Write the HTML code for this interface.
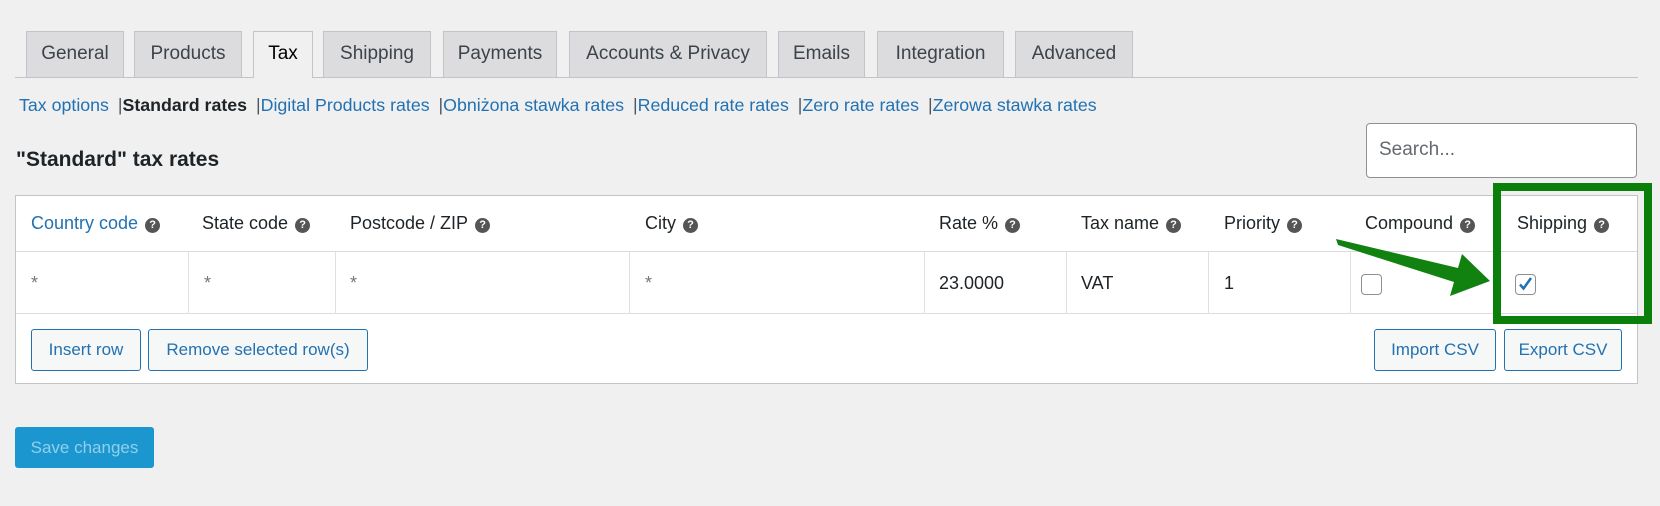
<!DOCTYPE html>
<html><head><meta charset="utf-8"><style>
*{box-sizing:border-box}
body{margin:0;width:1660px;height:506px;background:#f0f0f1;font-family:"Liberation Sans",sans-serif;color:#1d2327;position:relative;overflow:hidden}
.a{position:absolute}
.tab{position:absolute;top:31px;height:46px;background:#dcdcde;border:1px solid #c3c4c7;border-bottom:none;font-size:19px;color:#3c434a;text-align:center;line-height:44px}
.sub{top:95px;left:19px;font-size:17.8px;color:#2271b1;white-space:nowrap}
.sub b{color:#1d2327}
.sub span{color:#50575e;margin-left:4px}
.q{display:inline-block;width:15px;height:15px;border-radius:50%;background:#555;color:#fff;font-size:11px;line-height:15px;text-align:center;font-weight:bold;vertical-align:1px;margin-left:7px}
.th{position:absolute;top:213px;font-size:18px;color:#1d2327;white-space:nowrap}
.td{position:absolute;top:273px;font-size:18px;color:#1d2327}
.vl{position:absolute;top:252px;width:1px;height:62px;background:#e0e0e0}
.btn{position:absolute;top:329px;height:42px;border:1px solid #2271b1;border-radius:3px;background:#f6f7f7;color:#2271b1;font-size:17px;line-height:40px;text-align:center}
.cb{position:absolute;top:274px;width:21px;height:21px;border:1px solid #8c8f94;border-radius:4px;background:#fff}
</style></head><body>
<div class="tab" style="left:26px;width:98px">General</div>
<div class="tab" style="left:134px;width:108px">Products</div>
<div class="tab" style="left:253px;width:60px;background:#f0f0f1;color:#000;z-index:2;height:47px">Tax</div>
<div class="tab" style="left:323px;width:108px">Shipping</div>
<div class="tab" style="left:443px;width:114px">Payments</div>
<div class="tab" style="left:569px;width:198px">Accounts &amp; Privacy</div>
<div class="tab" style="left:778px;width:87px">Emails</div>
<div class="tab" style="left:877px;width:127px">Integration</div>
<div class="tab" style="left:1015px;width:118px">Advanced</div>
<div class="a" style="left:15px;top:77px;width:1623px;height:1px;background:#c3c4c7"></div>
<div class="a sub">Tax options <span>|</span><b>Standard rates</b> <span>|</span>Digital Products rates <span>|</span>Obniżona stawka rates <span>|</span>Reduced rate rates <span>|</span>Zero rate rates <span>|</span>Zerowa stawka rates</div>
<div class="a" style="left:16px;top:148px;font-size:21px;font-weight:bold">"Standard" tax rates</div>
<div class="a" style="left:1366px;top:123px;width:271px;height:55px;background:#fff;border:1px solid #8c8f94;border-radius:4px;font-size:19px;color:#646970;padding:15px 12px">Search...</div>
<div class="a" style="left:15px;top:195px;width:1623px;height:189px;background:#fff;border:1px solid #c3c4c7"></div>
<div class="a" style="left:16px;top:251px;width:1621px;height:1px;background:#dcdcde"></div>
<div class="a" style="left:16px;top:313px;width:1621px;height:1px;background:#dcdcde"></div>
<div class="vl" style="left:188px"></div><div class="vl" style="left:335px"></div><div class="vl" style="left:629px"></div><div class="vl" style="left:924px"></div><div class="vl" style="left:1066px"></div><div class="vl" style="left:1208px"></div><div class="vl" style="left:1350px"></div><div class="vl" style="left:1497px"></div>
<div class="th" style="left:31px;color:#2271b1">Country code<span class="q">?</span></div>
<div class="th" style="left:202px">State code<span class="q">?</span></div>
<div class="th" style="left:350px">Postcode / ZIP<span class="q">?</span></div>
<div class="th" style="left:645px">City<span class="q">?</span></div>
<div class="th" style="left:939px">Rate %<span class="q">?</span></div>
<div class="th" style="left:1081px">Tax name<span class="q">?</span></div>
<div class="th" style="left:1224px">Priority<span class="q">?</span></div>
<div class="th" style="left:1365px">Compound<span class="q">?</span></div>
<div class="th" style="left:1517px">Shipping<span class="q">?</span></div>
<div class="td" style="left:31px;color:#777">*</div>
<div class="td" style="left:204px;color:#777">*</div>
<div class="td" style="left:350px;color:#777">*</div>
<div class="td" style="left:645px;color:#777">*</div>
<div class="td" style="left:939px">23.0000</div>
<div class="td" style="left:1081px">VAT</div>
<div class="td" style="left:1224px">1</div>
<div class="cb" style="left:1361px"></div>
<div class="cb" style="left:1515px"><svg width="19" height="19" viewBox="0 0 19 19"><path d="M4 9.5l3.5 4L15 3" fill="none" stroke="#2271b1" stroke-width="2.5"/></svg></div>
<div class="btn" style="left:31px;width:110px">Insert row</div>
<div class="btn" style="left:148px;width:220px">Remove selected row(s)</div>
<div class="btn" style="left:1374px;width:122px">Import CSV</div>
<div class="btn" style="left:1504px;width:118px">Export CSV</div>
<div class="a" style="left:15px;top:427px;width:139px;height:41px;background:#1b96cf;border-radius:3px;color:#8fd0ec;font-size:17px;line-height:41px;text-align:center">Save changes</div>
<div class="a" style="left:1493px;top:183px;width:159px;height:141px;border:8px solid #0a7f0a"></div>
<svg class="a" style="left:0;top:0" width="1660" height="506"><path d="M1336 239 L1458 268 L1462 254 L1490 281 L1450 296 L1454 282 L1338 245 Z" fill="#11820f"/></svg>
</body></html>
